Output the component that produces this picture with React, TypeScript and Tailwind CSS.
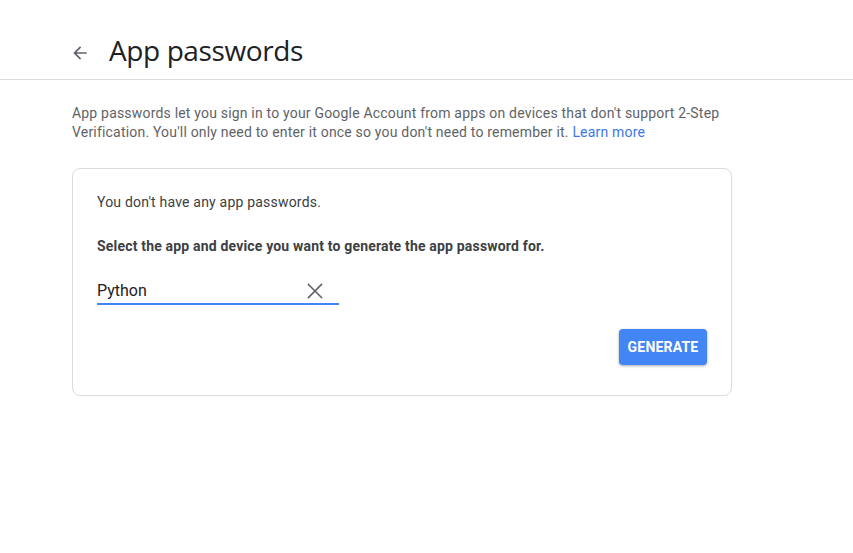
import type { FC } from 'react';

const App: FC = () => {
    return (
        <div className="min-h-[553px] bg-white font-['Roboto','Liberation_Sans',sans-serif]">
            <header className="h-[80px] border-b border-[#dadce0] flex items-end pb-[11px] pl-[66px]">
                <button className="w-[28px] h-[28px] flex items-center justify-center text-[#5f6368] mr-[15px] mb-[1px]">
                    <svg width="20" height="20" viewBox="0 0 24 24" fill="currentColor">
                        <path d="M20 11H7.83l5.59-5.59L12 4l-8 8 8 8 1.41-1.41L7.83 13H20v-2z" />
                    </svg>
                </button>
                <h1 className="text-[28px] leading-[36px] text-[#202124] font-['Open_Sans',sans-serif] tracking-[-0.4px]">App passwords</h1>
            </header>

            <main className="pl-[72px] pr-[122px] pt-[24px]">
                <p className="text-[14px] leading-[19px] tracking-[0.19px] text-[#5f6368] w-[670px]">
                    App passwords let you sign in to your Google Account from apps on devices that don't support 2-Step Verification. You'll only need to enter it once so you don't need to remember it.{' '}
                    <a className="text-[#3b78e7]">Learn more</a>
                </p>

                <div className="mt-[26px] w-[660px] h-[228px] border border-[#dadce0] rounded-[8px] px-[24px] pt-[23px] text-[#3c4043]">
                    <p className="text-[14px] leading-[20px] tracking-[0.2px]">You don't have any app passwords.</p>
                    <p className="mt-[24px] text-[14px] leading-[20px] font-bold tracking-[0.18px]">Select the app and device you want to generate the app password for.</p>

                    <div className="mt-[23px] w-[242px] h-[26px] border-b-2 border-[#4285f4] flex items-center justify-between pr-[16px]">
                        <span className="text-[16px] text-[#202124]">Python</span>
                        <svg width="16" height="16" viewBox="0 0 16 16" stroke="#5f6368" strokeWidth="1.6" strokeLinecap="square">
                            <path d="M1.5 1.5 14.5 14.5M14.5 1.5 1.5 14.5" />
                        </svg>
                    </div>

                    <div className="flex justify-end mt-[24px]">
                        <button className="w-[88px] h-[36px] rounded-[4px] bg-[#4285f4] text-white text-[14px] font-bold tracking-[0.2px] shadow-[0_1px_3px_rgba(0,0,0,0.35)]">
                            GENERATE
                        </button>
                    </div>
                </div>
            </main>
        </div>
    );
};

export default App;
